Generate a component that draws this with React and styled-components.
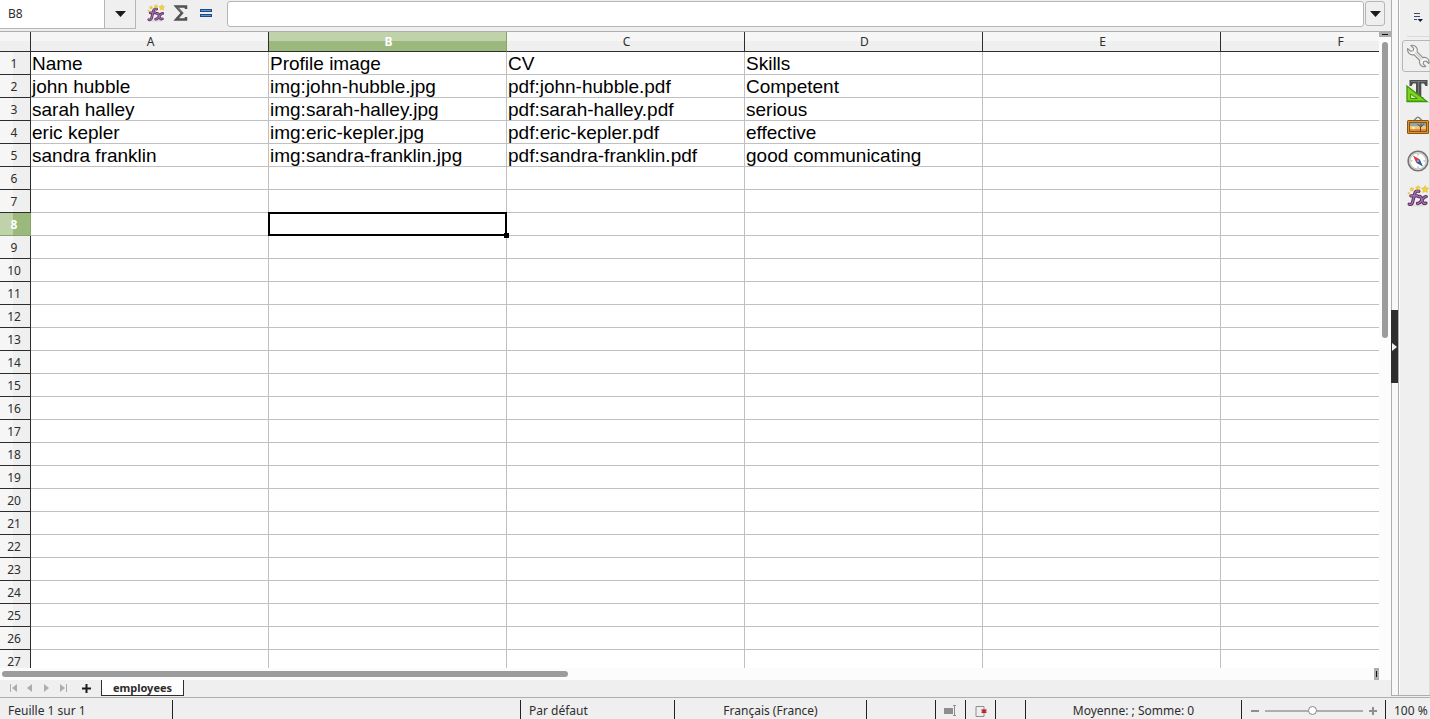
import React from 'react';
import styled, { createGlobalStyle, css } from 'styled-components';

const GlobalStyle = createGlobalStyle`
  * { box-sizing: border-box; }
  html, body, #root { height: 100%; margin: 0; }
  body { overflow: hidden; background: #efefef; color: #2d2d2d; font: 12px/16px "Noto Sans", sans-serif; }
  button, input { font: inherit; color: inherit; margin: 0; }
  button { padding: 0; border: 0; background: none; }
  svg { display: block; flex: none; }
`;

const Window = styled.div`
  display: flex;
  flex-direction: column;
  height: 100vh;
`;
const Body = styled.div`
  display: flex;
  flex: 1;
  min-height: 0;
  border-bottom: 1px solid #aeaeae;
`;
const Workspace = styled.main`
  display: flex;
  flex-direction: column;
  flex: 1;
  min-width: 0;
`;

const FormulaBar = styled.div`
  display: flex;
  align-items: flex-start;
  height: 32px;
  padding-right: 6px;
  border-bottom: 1px solid #aeaeae;
`;
const NameBox = styled.div`
  display: flex;
  width: 136px;
  height: 29px;
  border: solid #b6b6b6;
  border-width: 0 1px 1px 0;
`;
const NameInput = styled.input`
  width: 105px;
  padding: 0 8px;
  border: 0;
  border-right: 1px solid #b6b6b6;
  background: #fff;
  outline: 0;
`;
const DropButton = styled.button`
  display: grid;
  place-items: center;
  flex: 1;
`;
const Tools = styled.div`
  display: flex;
  gap: 5px;
  width: 91px;
  padding: 3px 0 0 10px;
`;
const ToolButton = styled.button`
  display: grid;
  place-items: center;
  width: 20px;
  height: 20px;
`;
const FormulaInput = styled.input`
  flex: 1;
  min-width: 0;
  height: 26px;
  margin-top: 1px;
  border: 1px solid #b6b6b6;
  border-radius: 3px;
  background: #fff;
  outline: 0;
`;
const ExpandButton = styled.button`
  display: grid;
  place-items: center;
  width: 20px;
  height: 25px;
  margin: 1px 0 0 1px;
  border: 1px solid #b6b6b6;
  border-radius: 3px;
`;

const GridArea = styled.div`
  display: flex;
  flex: 1;
  min-height: 0;
`;
const SheetView = styled.div`
  flex: 1;
  min-width: 0;
  overflow: hidden;
  background: #fff;
`;
const Sheet = styled.table`
  width: 1459px;
  table-layout: fixed;
  border-collapse: separate;
  border-spacing: 0;
`;
const HeadCol = styled.col`
  width: 31px;
`;
const ColumnHead = styled.th`
  height: 20px;
  padding: 0 0 0 2px;
  border: solid #2d2d2d;
  border-width: 0 1px 1px 0;
  background: linear-gradient(#f6f6f6 9px, #efefef 9px);
  font-weight: 400;
  line-height: 19px;
  ${(p) => p.$active && css`
    border-color: #86a566;
    border-bottom-color: #2d2d2d;
    background: linear-gradient(#c0d2aa 9px, #9bb97d 9px);
    color: #fff;
    font-weight: 700;
  `}
`;
const RowHead = styled.th`
  height: 23px;
  padding: 2px 2px 0 0;
  border: solid #2d2d2d;
  border-width: 0 1px 1px 0;
  background: linear-gradient(90deg, #f6f6f6 13px, #efefef 13px);
  font-weight: 400;
  line-height: 20px;
  ${(p) => p.$active && css`
    border-color: #86a566;
    background: linear-gradient(90deg, #c0d2aa 13px, #9bb97d 13px);
    color: #fff;
    font-weight: 700;
  `}
`;
const Cell = styled.td`
  position: relative;
  height: 23px;
  padding: 2px 1px 0;
  border: solid #c0c0c0;
  border-width: 0 1px 1px 0;
  color: #000;
  font: 19px/20px "Liberation Sans", Arial, sans-serif;
  white-space: nowrap;
`;
const Cursor = styled.span`
  position: absolute;
  z-index: 1;
  inset: -1px;
  border: 2px solid #000;
  &::after {
    content: "";
    position: absolute;
    right: -4px;
    bottom: -4px;
    width: 5px;
    height: 5px;
    background: #000;
  }
`;

const VerticalBar = styled.div`
  display: flex;
  flex-direction: column;
  align-items: center;
  width: 12px;
  background: #fcfcfc;
`;
const HorizontalBar = styled.div`
  display: flex;
  align-items: center;
  height: 12px;
  padding: 0 12px 0 2px;
  background: #fcfcfc;
`;
const Thumb = styled.div`
  flex: none;
  border-radius: 3px;
  background: #9c9c9c;
  ${(p) => (p.$vertical
    ? css`width: 6px; height: 46.6%; margin-top: 5px;`
    : css`width: 41.1%; height: 6px;`)}
`;
const SplitGrip = styled.div`
  display: grid;
  place-items: center;
  flex: none;
  background: #aeaeae;
  ${(p) => (p.$vertical
    ? css`width: 12px; height: 5px;`
    : css`width: 5px; height: 12px; margin-left: auto;`)}
  &::after {
    content: "";
    background: #111;
    ${(p) => (p.$vertical ? css`width: 6px; height: 1px;` : css`width: 1px; height: 6px;`)}
  }
`;

const TabBar = styled.nav`
  display: flex;
  height: 17px;
`;
const TabButtons = styled.div`
  display: flex;
  width: 101px;
  padding-left: 5px;
`;
const TabNav = styled.button`
  display: grid;
  place-items: center;
  width: ${(p) => (p.$wide ? 30 : 17)}px;
  height: 16px;
`;
const Tab = styled.button`
  width: 83px;
  height: 16px;
  border: solid #2d2d2d;
  border-width: 0 1px 1px 1px;
  background: #fff;
  font-size: 11px;
  font-weight: 700;
  line-height: 15px;
`;

const Splitter = styled.div`
  display: flex;
  align-items: center;
  width: 8px;
  margin-bottom: 1px;
  padding-bottom: 2px;
  border: solid #aeaeae;
  border-width: 0 1px 1px;
  background: #f8f8f8;
`;
const SplitterButton = styled.button`
  display: grid;
  place-items: center;
  flex: none;
  width: 7px;
  height: 73px;
  margin-left: -1px;
  background: #2e2e2e;
`;
const Sidebar = styled.aside`
  display: flex;
  flex-direction: column;
  width: 31px;
  margin-bottom: 1px;
  padding-left: 3px;
  overflow: hidden;
  border: solid #aeaeae;
  border-width: 0 0 1px;
  box-shadow: inset 1px 0 #fbfbfb, inset -1px 0 #deded8;
`;
const SideMenu = styled.button`
  display: grid;
  place-items: center;
  width: 32px;
  height: 36px;
  padding-bottom: 2px;
`;
const SideRule = styled.hr`
  flex: none;
  width: 24px;
  height: 1px;
  margin: 0 0 3px 5px;
  border: 0;
  background: #dadada;
`;
const SideButton = styled.button`
  display: grid;
  place-items: center;
  flex: none;
  width: 32px;
  height: 32px;
  margin-bottom: 3px;
  border: 1px solid ${(p) => (p.$active ? '#b6b6b6' : 'transparent')};
  border-radius: 3px;
`;

const StatusBar = styled.footer`
  display: flex;
  height: 21px;
  padding-top: 2px;
`;
const Segment = styled.div`
  display: flex;
  align-items: center;
  justify-content: ${(p) => (p.$center ? 'center' : 'flex-start')};
  flex: ${(p) => (p.$grow ? '1 1' : '0 0')} ${(p) => p.$width}px;
  min-width: 0;
  padding: 2px 0 0 ${(p) => (p.$center ? 0 : 8)}px;
  border-left: ${(p) => (p.$first ? 0 : 1)}px solid #222;
  white-space: nowrap;
`;
const ZoomButton = styled.button`
  display: grid;
  place-items: center;
  width: 10px;
  height: 10px;
`;
const ZoomSlider = styled.input`
  appearance: none;
  width: 98px;
  height: 10px;
  margin: 0 5px;
  background: linear-gradient(#aeaeae, #aeaeae) center / 100% 2px no-repeat;
  &::-webkit-slider-thumb {
    appearance: none;
    width: 9px;
    height: 9px;
    border: 1px solid #858585;
    border-radius: 50%;
    background: #fff;
  }
`;

const Caret = () => (
  <svg width="11" height="6" viewBox="0 0 11 6"><path d="M0 0h11L5.5 6z" fill="#1b1b1b" /></svg>
);

const FxIcon = ({ size }) => (
  <svg width={size} height={size} viewBox="0 0 20 20" aria-hidden="true">
    <ellipse cx="10" cy="18.6" rx="8" ry="1" fill="#dcdcdc" />
    <g fill="none" stroke="#5d3164" strokeWidth="3" strokeLinecap="round" strokeLinejoin="round">
      <path d="M2 17.4c2.300 1 3-1 3.500-3.400l1.500-6c.5-2 1.700-3 3.800-2.300M3.500 9.800h6M10.500 10.500c2.500-.7 2.500 1.500 3.200 3.600.7 2 1.300 3.200 3.500 2.400M17.500 10.500c-2 0-3.500 2.300-4.500 4-1 1.600-1.700 2.500-3.500 2.300" />
      <path stroke="#a273a8" strokeWidth="1.2" d="M2 17.400c2.300 1 3-1 3.500-3.400l1.500-6c.5-2 1.700-3 3.800-2.300M3.500 9.800h6M10.500 10.500c2.500-.7 2.500 1.500 3.200 3.600.7 2 1.300 3.200 3.500 2.400M17.500 10.500c-2 0-3.500 2.300-4.500 4-1 1.600-1.700 2.500-3.500 2.300" />
    </g>
    <g fill="#f3d23a" stroke="#d9b21d" strokeWidth=".4">
      <path d="M16.500.5l1 2 2.300.4-1.700 1.600.4 2.300-2-1.100-2.100 1.100.4-2.300-1.600-1.600 2.300-.4z" />
      <path d="M10 .500l.7 1.300 1.500.3-1.100 1 .3 1.600-1.400-.7-1.400.7.3-1.600-1.100-1 1.500-.3z" />
      <path d="M4.500 2l.6 1.100 1.200.2-.9.900.2 1.300-1.100-.6-1.200.6.200-1.300-.9-.9 1.300-.2zM1.700 6.500l1 1-1 1-1-1z" />
    </g>
  </svg>
);
const SumIcon = () => (
  <svg width="16" height="18" viewBox="0 0 16 18" aria-hidden="true">
    <path d="M13 5V2.500H3.200L9 9l-5.800 6.500H13V13" fill="none" stroke="#505350" strokeWidth="2.500" />
    <path d="M4 3l5 5.500" stroke="#8b8e8b" strokeWidth=".8" />
  </svg>
);
const EqualIcon = () => (
  <svg width="12" height="8" viewBox="0 0 12 8" aria-hidden="true">
    <path d="M0 0h12v3H0zM0 5h12v3H0z" fill="#204a87" />
    <path d="M1 1h10v1H1zM1 6h10v1H1z" fill="#5c93d0" />
  </svg>
);
const MenuIcon = () => (
  <svg width="9" height="9" viewBox="0 0 9 9" aria-hidden="true">
    <path d="M0 .5h6M0 3.500h6M0 6.500h3" stroke="#3a4a68" />
    <path d="M3.500 6H9L6.300 9z" fill="#101f3d" />
  </svg>
);
const WrenchIcon = () => (
  <svg width="24" height="24" viewBox="0 0 24 24" aria-hidden="true">
    <path d="M1.500 4.500l3 2.700 2.500-.4.800-2.500-3-2.800c2.800-.8 5.800.7 6.400 3.600.2 1 .1 1.800-.1 2.700l5.800 5.800c3-.9 5.800 1 6.100 3.700.1.800 0 1.500-.2 2.200l-2.700-2.500-2.400.5-.6 2.400 2.600 2.600c-3 .8-5.800-1.100-6.200-3.800-.1-.8 0-1.500.2-2.200L8 10.700c-3.300.9-7-1.700-6.500-6.200z" fill="#f7f7f6" stroke="#8b8d8a" strokeWidth="1.100" strokeLinejoin="round" />
    <path d="M9 8.500l7 7" stroke="#d0d0cf" strokeWidth="1.400" />
  </svg>
);
const StylesIcon = () => (
  <svg width="24" height="24" viewBox="0 0 24 24" aria-hidden="true">
    <path d="M3.500 1h18v6h-2l-1.500-2.500h-2.700V18h2v2H9v-2h1V4.500H7L5.500 7h-2z" fill="#4b4e4c" />
    <path d="M5 2.500h15M12.500 3v15" stroke="#777a78" strokeWidth="1.200" />
    <path d="M1 7v15.500h20z" fill="#7ed321" stroke="#3c9608" strokeWidth="1.300" />
    <path d="M4.500 15v4.500h7z" fill="#c9efa0" stroke="#3c9608" />
    <path d="M3 22v-1M6 22v-1M9 22v-1M12 22v-1M15 22v-1" stroke="#3c9608" strokeWidth=".8" />
  </svg>
);
const GalleryIcon = () => (
  <svg width="22" height="20" viewBox="0 0 22 20" aria-hidden="true">
    <path d="M7 4.500L10 1.500q1-.8 2 0L15 4.500" fill="none" stroke="#80827f" strokeWidth="1.400" />
    <path d="M1.500 4h19q1.500 0 1.500 1.500v11q0 1.500-1.500 1.500h-19Q0 18 0 16.500v-11Q0 4 1.500 4z" fill="#8f5208" />
    <path d="M1 5h20v12H1z" fill="#dc9535" />
    <path d="M2 6h18v10H2z" fill="#8f5208" />
    <path d="M3 7h16v3H3z" fill="#86a9b4" />
    <path d="M3 10h16v3H3z" fill="#ecc67c" />
    <path d="M3 13h16v2H3z" fill="#e08a3c" />
    <circle cx="6.500" cy="12" r="1.300" fill="#fff3b6" />
    <path d="M13.500 15v-4L10.500 8M13.500 11.500L17 7.500M14 11V7.500" fill="none" stroke="#4a4130" strokeWidth=".9" />
  </svg>
);
const CompassIcon = () => (
  <svg width="22" height="22" viewBox="0 0 22 22" aria-hidden="true">
    <circle cx="11" cy="11" r="9.800" fill="#f3f3f2" stroke="#747672" strokeWidth="1.600" />
    <circle cx="11" cy="11" r="8.200" fill="#fff" stroke="#c7c8c5" strokeWidth="1.200" />
    <path d="M11 3.500v2M11 16.500v2M3.500 11h2M16.500 11h2" stroke="#a4a5a2" />
    <path d="M6 5.500l6.700 3.700-3.500 3.500z" fill="#df3b3f" />
    <path d="M16 16.500l-6.800-3.800 3.500-3.500z" fill="#315c98" />
    <circle cx="11" cy="11" r="1" fill="#9ab2d3" />
  </svg>
);
const InsertModeIcon = () => (
  <svg width="13" height="11" viewBox="0 0 13 11" aria-hidden="true">
    <path d="M0 3h9v6H0z" fill="#8e8e8e" />
    <path d="M9 .500h3M9 10.500h3M10.500 1v9" fill="none" stroke="#8e8e8e" />
  </svg>
);
const ModifiedIcon = () => (
  <svg width="12" height="12" viewBox="0 0 12 12" aria-hidden="true">
    <path d="M9 3V1.500H1v10h8V9" fill="none" stroke="#8e8e8e" />
    <path d="M9 3.500v5M6.500 4.700l5 2.600M11.500 4.700l-5 2.600" stroke="#b3262d" strokeWidth="1.300" />
  </svg>
);

const arrows = [
  ['First sheet', 'M1 0h1v8H1zM8 0v8L3 4z'],
  ['Previous sheet', 'M7 0v8L2 4z'],
  ['Next sheet', 'M2 0v8l5-4z'],
  ['Last sheet', 'M1 0v8l5-4zM7 0h1v8H7z'],
];

const columns = ['A', 'B', 'C', 'D', 'E', 'F'];
const data = [
  ['Name', 'Profile image', 'CV', 'Skills'],
  ['john hubble', 'img:john-hubble.jpg', 'pdf:john-hubble.pdf', 'Competent'],
  ['sarah halley', 'img:sarah-halley.jpg', 'pdf:sarah-halley.pdf', 'serious'],
  ['eric kepler', 'img:eric-kepler.jpg', 'pdf:eric-kepler.pdf', 'effective'],
  ['sandra franklin', 'img:sandra-franklin.jpg', 'pdf:sandra-franklin.pdf', 'good communicating'],
];
const rows = Array.from({ length: 27 }, (_, i) => data[i] || []);

export default function App() {
  return (
    <Window>
      <GlobalStyle />
      <Body>
        <Workspace>
          <FormulaBar>
            <NameBox>
              <NameInput aria-label="Name box" defaultValue="B8" />
              <DropButton aria-label="Named ranges"><Caret /></DropButton>
            </NameBox>
            <Tools>
              <ToolButton aria-label="Function wizard"><FxIcon size={18} /></ToolButton>
              <ToolButton aria-label="Sum"><SumIcon /></ToolButton>
              <ToolButton aria-label="Formula"><EqualIcon /></ToolButton>
            </Tools>
            <FormulaInput aria-label="Input line" />
            <ExpandButton aria-label="Expand formula bar"><Caret /></ExpandButton>
          </FormulaBar>

          <GridArea>
            <SheetView>
              <Sheet>
                <colgroup>
                  <HeadCol />
                  {columns.map((c) => <col key={c} />)}
                </colgroup>
                <thead>
                  <tr>
                    <ColumnHead aria-label="Select all" />
                    {columns.map((c) => <ColumnHead key={c} scope="col" $active={c === 'B'}>{c}</ColumnHead>)}
                  </tr>
                </thead>
                <tbody>
                  {rows.map((row, i) => (
                    <tr key={i}>
                      <RowHead scope="row" $active={i === 7}>{i + 1}</RowHead>
                      {columns.map((c, j) => (
                        <Cell key={c}>
                          {row[j]}
                          {i === 7 && c === 'B' && <Cursor />}
                        </Cell>
                      ))}
                    </tr>
                  ))}
                </tbody>
              </Sheet>
            </SheetView>
            <VerticalBar>
              <SplitGrip $vertical />
              <Thumb $vertical />
            </VerticalBar>
          </GridArea>
          <HorizontalBar>
            <Thumb />
            <SplitGrip />
          </HorizontalBar>
          <TabBar>
            <TabButtons>
              {arrows.map(([label, d]) => (
                <TabNav key={label} aria-label={label}>
                  <svg width="9" height="8" viewBox="0 0 9 8"><path d={d} fill="#adadad" /></svg>
                </TabNav>
              ))}
              <TabNav $wide aria-label="Add sheet">
                <svg width="9" height="9" viewBox="0 0 9 9"><path d="M4.500 0v9M0 4.500h9" stroke="#1b1b1b" strokeWidth="2" /></svg>
              </TabNav>
            </TabButtons>
            <Tab>employees</Tab>
          </TabBar>
        </Workspace>

        <Splitter>
          <SplitterButton aria-label="Collapse sidebar">
            <svg width="5" height="8" viewBox="0 0 5 8"><path d="M0 0l5 4-5 4z" fill="#f4f4f4" /></svg>
          </SplitterButton>
        </Splitter>

        <Sidebar>
          <SideMenu aria-label="Sidebar settings"><MenuIcon /></SideMenu>
          <SideRule />
          <SideButton $active aria-label="Properties"><WrenchIcon /></SideButton>
          <SideButton aria-label="Styles"><StylesIcon /></SideButton>
          <SideButton aria-label="Gallery"><GalleryIcon /></SideButton>
          <SideButton aria-label="Navigator"><CompassIcon /></SideButton>
          <SideButton aria-label="Functions"><FxIcon size={22} /></SideButton>
        </Sidebar>
      </Body>

      <StatusBar>
        <Segment $width={172} $first>Feuille 1 sur 1</Segment>
        <Segment $width={348} $grow />
        <Segment $width={154}>Par défaut</Segment>
        <Segment $width={192} $center>Français (France)</Segment>
        <Segment $width={69} />
        <Segment $width={30} $center><InsertModeIcon /></Segment>
        <Segment $width={30} $center><ModifiedIcon /></Segment>
        <Segment $width={30} />
        <Segment $width={216} $center>Moyenne: ; Somme: 0</Segment>
        <Segment $width={144} $center>
          <ZoomButton aria-label="Zoom out">
            <svg width="8" height="8" viewBox="0 0 8 8"><path d="M0 4h8" stroke="#8e8e8e" strokeWidth="2" /></svg>
          </ZoomButton>
          <ZoomSlider type="range" aria-label="Zoom" min="0" max="100" defaultValue="49" />
          <ZoomButton aria-label="Zoom in">
            <svg width="8" height="8" viewBox="0 0 8 8"><path d="M0 4h8M4 0v8" stroke="#8e8e8e" strokeWidth="2" /></svg>
          </ZoomButton>
        </Segment>
        <Segment $width={45}>100 %</Segment>
      </StatusBar>
    </Window>
  );
}
